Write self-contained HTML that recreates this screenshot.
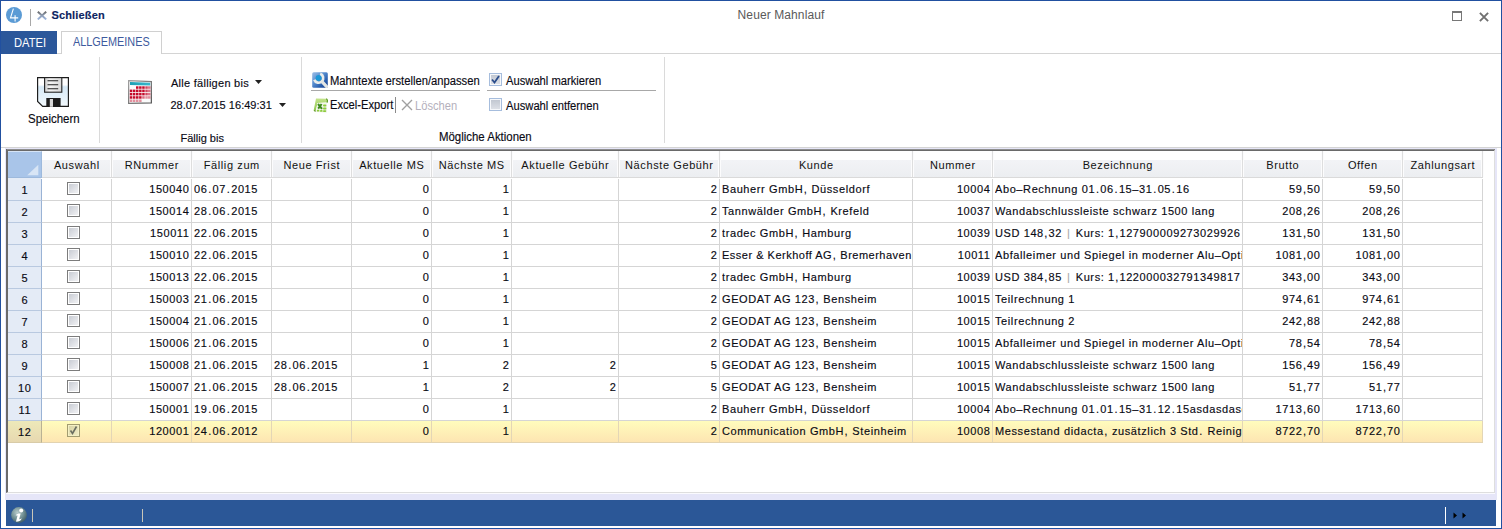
<!DOCTYPE html>
<html><head><meta charset="utf-8">
<style>
*{margin:0;padding:0;box-sizing:border-box}
html,body{width:1502px;height:529px;overflow:hidden;background:#fff;font-family:"Liberation Sans",sans-serif;color:#0a0a14;-webkit-text-stroke-width:.15px}
.a{position:absolute}
#win{position:absolute;left:0;top:0;width:1502px;height:529px;border:1px solid #2150a0;background:#fff}
.t{position:absolute;white-space:pre;line-height:1}
.sg{font-size:12px;transform-origin:0 0;transform:scaleX(0.917)}
/* grid */
.hc{-webkit-text-stroke-width:0;position:absolute;top:152px;height:25px;line-height:26px;text-align:center;font-size:11px;letter-spacing:.6px;text-indent:.6px;color:#111;white-space:nowrap;overflow:hidden}
.hs{position:absolute;top:151px;width:1px;height:26px;background:#dedede;box-shadow:-1px 0 0 #fcfcfd,1px 0 0 #fcfcfd}
.row{position:absolute;left:42px;width:1441px;height:22px;border-bottom:1px solid #d5d5d5}
.row.sel{background:linear-gradient(#fffcbc,#fde5b2);border-bottom-color:#e2d3b1}
.rh{position:absolute;left:8px;width:34px;height:22px;line-height:23px;background:#e4ebf6;border-right:1px solid #9ab3d5;border-bottom:1px solid #b9c9e0;text-align:center;font-size:11px;letter-spacing:.6px;text-indent:.6px}
.rh.selh{background:linear-gradient(#ede9b9,#e7d8b0);border-bottom-color:#d8cba8;border-right-color:#b9b294}
.c{position:absolute;height:22px;line-height:22px;font-size:11px;letter-spacing:.6px;white-space:nowrap;overflow:hidden}
.c.r{text-align:right}
.c{word-spacing:0}
.pd{padding:0 .75px}.pc{padding:0 .5px}.ph{padding:0 1.6px}
.c i{font-style:normal;color:#aaa;padding:0 1.5px}
.vs{position:absolute;width:1px;height:21px;background:#d5d5d5}
.vs.vsel{background:#e3d6b6}
.cb{position:absolute;width:13px;height:13px;border:1px solid #7c7c7c;box-shadow:inset 0 0 0 1px #fff;background:linear-gradient(135deg,#c4c8d0,#f6f6f8)}
.cb.chk{border-color:#a29c70;box-shadow:inset 0 0 0 1px #f4f0c4;background:linear-gradient(135deg,#d6d2a4,#f2eec6)}
.cb svg{position:absolute;left:-1px;top:-1px}
</style></head><body>
<div id="win">
</div>
<!-- title bar -->
<svg class="a" style="left:6px;top:7px" width="16" height="16" viewBox="0 0 16 16"><circle cx="8" cy="8" r="8" fill="#5b9bd5"/><path d="M7.4 1.6 L4.5 10.9 L12.2 10.9 M9.1 8.2 L9.1 14.4" stroke="#fff" stroke-width="1.1" fill="none"/></svg>
<div class="a" style="left:30px;top:9px;width:1px;height:17px;background:#a8a8a8"></div>
<svg class="a" style="left:37px;top:11px" width="10" height="9" viewBox="0 0 10 9"><defs><linearGradient id="xg2" x1="0" y1="0" x2="0" y2="1"><stop offset="0" stop-color="#6b6b6b"/><stop offset="0.45" stop-color="#8c9ab0"/><stop offset="1" stop-color="#9cb6e0"/></linearGradient></defs><path d="M0.8 0.8 L9.2 8.4 M9.2 0.8 L0.8 8.4" stroke="url(#xg2)" stroke-width="2" fill="none"/></svg>
<div class="t" style="left:51.5px;top:10px;font-size:11px;font-weight:bold;color:#0c2461;letter-spacing:0.15px">Schließen</div>
<div class="t" style="left:737.6px;top:8.5px;font-size:12px;color:#5a5a5a;letter-spacing:.1px;-webkit-text-stroke-width:0">Neuer Mahnlauf</div>
<div class="a" style="left:1452px;top:11px;width:10px;height:10px;border:1px solid #777;border-top-width:2px"></div>
<svg class="a" style="left:1479px;top:12px" width="10" height="10" viewBox="0 0 10 10"><path d="M0.9 0.9 L9.1 9.1 M9.1 0.9 L0.9 9.1" stroke="#707070" stroke-width="1.9" fill="none"/></svg>
<!-- tabs -->
<div class="a" style="left:1px;top:53px;width:1500px;height:1px;background:#d4d4d4"></div>
<div class="a" style="left:1px;top:31px;width:56px;height:23px;background:#2b579a"></div>
<div class="t" style="left:14px;top:37px;font-size:12px;color:#fff;transform-origin:0 0;transform:scaleX(.93);-webkit-text-stroke-width:0">DATEI</div>
<div class="a" style="left:61px;top:31px;width:101px;height:23px;border:1px solid #d0d0d0;border-bottom:none;background:#fff"></div>
<div class="t" style="left:73px;top:36.2px;font-size:12px;color:#3d5a9e;transform-origin:0 0;transform:scaleX(.905);-webkit-text-stroke-width:0">ALLGEMEINES</div>
<!-- ribbon -->
<div class="a" style="left:99px;top:57px;width:1px;height:86px;background:#dadada"></div>
<div class="a" style="left:301px;top:57px;width:1px;height:86px;background:#dadada"></div>
<div class="a" style="left:664px;top:57px;width:1px;height:86px;background:#dadada"></div>
<!-- floppy -->
<svg class="a" style="left:37px;top:77px" width="32" height="31" viewBox="0 0 32 31">
<defs><linearGradient id="fg" x1="0" y1="0" x2="0" y2="1"><stop offset="0" stop-color="#fff"/><stop offset="0.25" stop-color="#fff"/><stop offset="0.32" stop-color="#d6e9f6"/><stop offset="1" stop-color="#f2f8fc"/></linearGradient>
<linearGradient id="lg" x1="0" y1="0" x2="1" y2="0"><stop offset="0" stop-color="#c8c8c8"/><stop offset="0.3" stop-color="#f4f4f4"/><stop offset="1" stop-color="#d8d8d8"/></linearGradient></defs>
<path d="M0.6 0.6 H31.4 V29.4 H5.7 L0.6 24.5 Z" fill="url(#fg)" stroke="#1a1a1a" stroke-width="1.15"/>
<rect x="7.6" y="0.6" width="17.2" height="14.6" fill="url(#lg)" stroke="#222" stroke-width="1.1"/>
<path d="M10.5 3.8 H21.2 M10.5 7.8 H21.2 M10.5 11.8 H21.2" stroke="#222" stroke-width="1.1"/>
<rect x="9.3" y="21" width="14.3" height="8.8" fill="#1c1c1c"/>
<rect x="12.8" y="22" width="3.2" height="7.8" fill="#d8d8d8"/>
</svg>
<div class="t sg" style="left:28px;top:112.5px;transform:scaleX(.955)">Speichern</div>
<!-- calendar -->
<svg class="a" style="left:128px;top:80px" width="24" height="24" viewBox="0 0 24 24">
<defs><linearGradient id="cg" x1="0" y1="0" x2="1" y2="1"><stop offset="0" stop-color="#a0a0a0"/><stop offset="1" stop-color="#5a5a5a"/></linearGradient>
<linearGradient id="tg" x1="0" y1="0" x2="1" y2="0"><stop offset="0" stop-color="#1c9fb4"/><stop offset="1" stop-color="#38b8cc"/></linearGradient></defs>
<path d="M0.6 0.6 L23.4 1.6 L23.4 22.8 L0.6 23.4 Z" fill="#fbfbfb" stroke="url(#cg)" stroke-width="1.3"/>
<path d="M2 2 L22.2 2.8 L22.2 5.4 L2 5 Z" fill="url(#tg)"/>
<g fill="#c40a2a"><rect x="8.0" y="6.3" width="2.5" height="2.5" opacity="1.0"/><rect x="11.1" y="6.3" width="2.5" height="2.5" opacity="1.0"/><rect x="14.2" y="6.3" width="2.5" height="2.5" opacity="1.0"/><rect x="17.3" y="6.3" width="2.5" height="2.5" opacity="0.75"/><rect x="20.0" y="6.3" width="2.5" height="2.5" opacity="0.55"/><rect x="1.8" y="9.6" width="2.5" height="2.5" opacity="1.0"/><rect x="4.9" y="9.6" width="2.5" height="2.5" opacity="1.0"/><rect x="8.0" y="9.6" width="2.5" height="2.5" opacity="1.0"/><rect x="11.1" y="9.6" width="2.5" height="2.5" opacity="1.0"/><rect x="14.2" y="9.6" width="2.5" height="2.5" opacity="1.0"/><rect x="17.3" y="9.6" width="2.5" height="2.5" opacity="0.75"/><rect x="20.0" y="9.6" width="2.5" height="2.5" opacity="0.55"/><rect x="1.8" y="12.9" width="2.5" height="2.5" opacity="1.0"/><rect x="4.9" y="12.9" width="2.5" height="2.5" opacity="1.0"/><rect x="8.0" y="12.9" width="2.5" height="2.5" opacity="1.0"/><rect x="11.1" y="12.9" width="2.5" height="2.5" opacity="1.0"/><rect x="14.2" y="12.9" width="2.5" height="2.5" opacity="1.0"/><rect x="17.3" y="12.9" width="2.5" height="2.5" opacity="0.75"/><rect x="20.0" y="12.9" width="2.5" height="2.5" opacity="0.55"/><rect x="1.8" y="16.2" width="2.5" height="2.5" opacity="1.0"/><rect x="4.9" y="16.2" width="2.5" height="2.5" opacity="1.0"/><rect x="8.0" y="16.2" width="2.5" height="2.5" opacity="1.0"/><rect x="11.1" y="16.2" width="2.5" height="2.5" opacity="1.0"/><rect x="14.2" y="16.2" width="2.5" height="2.5" opacity="0.6"/><rect x="17.3" y="16.2" width="2.5" height="2.5" opacity="0.45"/><rect x="20.0" y="16.2" width="2.5" height="2.5" opacity="0.45"/><rect x="1.8" y="19.5" width="2.5" height="2.5" opacity="0.45"/><rect x="4.9" y="19.5" width="2.5" height="2.5" opacity="0.45"/><rect x="8.0" y="19.5" width="2.5" height="2.5" opacity="0.45"/><rect x="11.1" y="19.5" width="2.5" height="2.5" opacity="0.45"/></g>
</svg>
<div class="t" style="left:171px;top:78px;font-size:11px;letter-spacing:0.27px">Alle fälligen bis</div>
<svg class="a" style="left:255px;top:80px" width="7" height="4"><path d="M0 0 H7 L3.5 4 Z" fill="#222"/></svg>
<div class="t" style="left:170.4px;top:100.3px;font-size:11px;letter-spacing:0.03px">28.07.2015 16:49:31</div>
<svg class="a" style="left:279px;top:103px" width="7" height="4"><path d="M0 0 H7 L3.5 4 Z" fill="#222"/></svg>
<div class="t" style="left:180.5px;top:132.5px;font-size:11px">Fällig bis</div>
<!-- actions -->
<svg class="a" style="left:312px;top:72px" width="16" height="16" viewBox="0 0 16 16">
<defs><linearGradient id="mg" x1="0" y1="0" x2="1" y2="1"><stop offset="0" stop-color="#9bbde6"/><stop offset="0.4" stop-color="#5a8fd0"/><stop offset="0.7" stop-color="#2a5fae"/><stop offset="1" stop-color="#173f8e"/></linearGradient></defs>
<rect x="0.2" y="0.2" width="15.6" height="15.6" rx="1.5" fill="url(#mg)"/>
<circle cx="6.6" cy="6.1" r="3" fill="#1c98d6"/>
<path d="M2.3 7.7 A4.6 4.6 0 1 0 8.2 1.8" stroke="#e9ecea" stroke-width="2.6" fill="none"/>
<path d="M10.2 9.8 L14.4 14.4" stroke="#e3e6e5" stroke-width="3.2" stroke-linecap="round"/>
</svg>
<div class="t sg" style="left:330.2px;top:74.8px;transform:scaleX(.935)">Mahntexte erstellen/anpassen</div>
<div class="a" style="left:311px;top:90px;width:169px;height:1px;background:#a8a8a8"></div>
<svg class="a" style="left:312px;top:97px" width="16" height="16" viewBox="0 0 16 16">
<defs><linearGradient id="xg" x1="0" y1="0" x2="0" y2="1"><stop offset="0" stop-color="#c4e48c"/><stop offset="1" stop-color="#8cc44a"/></linearGradient>
<linearGradient id="xs" x1="0" y1="0" x2="1" y2="1"><stop offset="0" stop-color="#ffffff"/><stop offset="1" stop-color="#e4ead8"/></linearGradient></defs>
<path d="M4 1.5 L15 1.8 L15 5.5 L5.6 6 L3.6 14.5 L1.6 13.8 Z" fill="url(#xg)"/>
<path d="M14.2 1.8 C15.8 2.4 15.8 5 14.6 5.6" stroke="#5c9a26" stroke-width="1.2" fill="none"/>
<path d="M2 13.6 L3.8 14.4" stroke="#5c8a2a" stroke-width="1"/>
<path d="M5.6 6 L15 5.6 L14.6 15.6 L3.6 15 Z" fill="url(#xs)"/>
<g fill="#8ccc3a"><rect x="11" y="7.5" width="3.4" height="2" rx="1"/><rect x="11" y="10.5" width="3.4" height="2" rx="1"/><rect x="4.8" y="12.8" width="2.6" height="1.8" rx=".9"/><rect x="8" y="13" width="2.6" height="1.8" rx=".9"/><rect x="11" y="13.2" width="3.2" height="1.8" rx=".9"/></g>
<path d="M6 7 L10 11.8 M9.6 7 L6.2 11.6" stroke="#3f8a1c" stroke-width="2"/>
</svg>
<div class="t sg" style="left:330.2px;top:99.3px;transform:scaleX(.93)">Excel-Export</div>
<div class="a" style="left:395px;top:97px;width:1px;height:16px;background:#8a8a8a"></div>
<svg class="a" style="left:401px;top:99px" width="12" height="12" viewBox="0 0 12 12"><path d="M1 1 L11 11 M11 1 L1 11" stroke="#a0a0a0" stroke-width="1.4" fill="none"/></svg>
<div class="t sg" style="left:415.2px;top:99.8px;color:#b4b0bc;transform:scaleX(.93);-webkit-text-stroke-width:0">Löschen</div>
<div class="a" style="left:489px;top:73px;width:13px;height:13px;border:1px solid #a6bddd;box-shadow:inset 0 0 0 1px #f6f8fb;background:linear-gradient(#bfc5cf,#dfe2e8)"></div>
<svg class="a" style="left:489px;top:73px" width="13" height="13"><path d="M3 6.5 L5.5 9.5 L10 3" stroke="#2b4d8c" stroke-width="1.8" fill="none"/></svg>
<div class="t sg" style="left:505.8px;top:74.8px;transform:scaleX(.933)">Auswahl markieren</div>
<div class="a" style="left:487px;top:90px;width:169px;height:1px;background:#a8a8a8"></div>
<div class="a" style="left:489px;top:98px;width:13px;height:13px;border:1px solid #a6bddd;box-shadow:inset 0 0 0 1px #f6f8fb;background:linear-gradient(#bfc5cf,#dfe2e8)"></div>
<div class="t sg" style="left:505.8px;top:100.4px;transform:scaleX(.933)">Auswahl entfernen</div>
<div class="t sg" style="left:438.8px;top:130.5px;transform:scaleX(.952)">Mögliche Aktionen</div>
<!-- ribbon bottom -->
<div class="a" style="left:1px;top:147px;width:1500px;height:1px;background:#d4d4d4"></div>
<!-- grid frame -->
<div class="a" style="left:5px;top:148px;width:1492px;height:352px;background:#e6e6f8"></div>
<div class="a" style="left:6px;top:149px;width:1489px;height:344px;background:#fff;border-top:2px solid #6a6a6a;border-left:2px solid #6a6a6a;border-right:1px solid #dedede;border-bottom:1px solid #dedede"></div>
<div class="a" style="left:7px;top:149px;width:1487px;height:1px;background:#8e8e8e"></div>
<div class="a" style="left:8px;top:151px;width:34px;height:27px;background:#a9c5e9;border-top:1px solid #d6e4f6;border-right:1px solid #9db9dc;border-bottom:1px solid #9db9dc"></div>
<svg class="a" style="left:26px;top:164px" width="13" height="12"><path d="M12.3 0.8 L12.3 11.3 L1.2 11.3 Z" fill="#dde8f6" opacity=".9"/></svg>
<div class="a" style="left:42px;top:151px;width:1441px;height:27px;background:linear-gradient(#fff 0,#fff 9px,#f2f3f6 9px,#eceef1 26px);border-bottom:1px solid #dadada"></div>
<div class="a" style="left:8px;top:178px;width:33px;height:1px;background:#e4ebf6"></div>
<div class="hc" style="left:42px;width:69px">Auswahl</div>
<div class="hs" style="left:111px"></div>
<div class="hc" style="left:112px;width:79px">RNummer</div>
<div class="hs" style="left:191px"></div>
<div class="hc" style="left:192px;width:79px">Fällig zum</div>
<div class="hs" style="left:271px"></div>
<div class="hc" style="left:272px;width:79px">Neue Frist</div>
<div class="hs" style="left:351px"></div>
<div class="hc" style="left:352px;width:79px">Aktuelle MS</div>
<div class="hs" style="left:431px"></div>
<div class="hc" style="left:432px;width:79px">Nächste MS</div>
<div class="hs" style="left:511px"></div>
<div class="hc" style="left:512px;width:106px">Aktuelle Gebühr</div>
<div class="hs" style="left:618px"></div>
<div class="hc" style="left:619px;width:100px">Nächste Gebühr</div>
<div class="hs" style="left:719px"></div>
<div class="hc" style="left:720px;width:192px">Kunde</div>
<div class="hs" style="left:912px"></div>
<div class="hc" style="left:913px;width:79px">Nummer</div>
<div class="hs" style="left:992px"></div>
<div class="hc" style="left:993px;width:249px">Bezeichnung</div>
<div class="hs" style="left:1242px"></div>
<div class="hc" style="left:1243px;width:79px">Brutto</div>
<div class="hs" style="left:1322px"></div>
<div class="hc" style="left:1323px;width:79px">Offen</div>
<div class="hs" style="left:1402px"></div>
<div class="hc" style="left:1403px;width:79px">Zahlungsart</div>
<div class="hs" style="left:1482px"></div>
<div class="row" style="top:179px"></div>
<div class="rh" style="top:179px">1</div>
<div class="cb" style="left:67px;top:182px"></div>
<div class="c r" style="left:112px;width:77.5px;top:178px">150040</div>
<div class="c l" style="left:194px;width:77px;top:178px">06<span class="pd">.</span>07<span class="pd">.</span>2015</div>
<div class="c r" style="left:352px;width:77.5px;top:178px">0</div>
<div class="c r" style="left:432px;width:77.5px;top:178px">1</div>
<div class="c r" style="left:619px;width:98.5px;top:178px">2</div>
<div class="c l" style="left:722px;width:190px;top:178px">Bauherr GmbH<span class="pc">,</span> Düsseldorf</div>
<div class="c r" style="left:913px;width:77.5px;top:178px">10004</div>
<div class="c l" style="left:995px;width:247px;top:178px">Abo–Rechnung 01<span class="pd">.</span>06<span class="pd">.</span>15–31<span class="pd">.</span>05<span class="pd">.</span>16</div>
<div class="c r" style="left:1243px;width:77.5px;top:178px">59<span class="pc">,</span>50</div>
<div class="c r" style="left:1323px;width:77.5px;top:178px">59<span class="pc">,</span>50</div>
<div class="vs" style="left:111px;top:179px"></div>
<div class="vs" style="left:191px;top:179px"></div>
<div class="vs" style="left:271px;top:179px"></div>
<div class="vs" style="left:351px;top:179px"></div>
<div class="vs" style="left:431px;top:179px"></div>
<div class="vs" style="left:511px;top:179px"></div>
<div class="vs" style="left:618px;top:179px"></div>
<div class="vs" style="left:719px;top:179px"></div>
<div class="vs" style="left:912px;top:179px"></div>
<div class="vs" style="left:992px;top:179px"></div>
<div class="vs" style="left:1242px;top:179px"></div>
<div class="vs" style="left:1322px;top:179px"></div>
<div class="vs" style="left:1402px;top:179px"></div>
<div class="vs" style="left:1482px;top:179px"></div>
<div class="row" style="top:201px"></div>
<div class="rh" style="top:201px">2</div>
<div class="cb" style="left:67px;top:204px"></div>
<div class="c r" style="left:112px;width:77.5px;top:200px">150014</div>
<div class="c l" style="left:194px;width:77px;top:200px">28<span class="pd">.</span>06<span class="pd">.</span>2015</div>
<div class="c r" style="left:352px;width:77.5px;top:200px">0</div>
<div class="c r" style="left:432px;width:77.5px;top:200px">1</div>
<div class="c r" style="left:619px;width:98.5px;top:200px">2</div>
<div class="c l" style="left:722px;width:190px;top:200px">Tannwälder GmbH<span class="pc">,</span> Krefeld</div>
<div class="c r" style="left:913px;width:77.5px;top:200px">10037</div>
<div class="c l" style="left:995px;width:247px;top:200px">Wandabschlussleiste schwarz 1500 lang</div>
<div class="c r" style="left:1243px;width:77.5px;top:200px">208<span class="pc">,</span>26</div>
<div class="c r" style="left:1323px;width:77.5px;top:200px">208<span class="pc">,</span>26</div>
<div class="vs" style="left:111px;top:201px"></div>
<div class="vs" style="left:191px;top:201px"></div>
<div class="vs" style="left:271px;top:201px"></div>
<div class="vs" style="left:351px;top:201px"></div>
<div class="vs" style="left:431px;top:201px"></div>
<div class="vs" style="left:511px;top:201px"></div>
<div class="vs" style="left:618px;top:201px"></div>
<div class="vs" style="left:719px;top:201px"></div>
<div class="vs" style="left:912px;top:201px"></div>
<div class="vs" style="left:992px;top:201px"></div>
<div class="vs" style="left:1242px;top:201px"></div>
<div class="vs" style="left:1322px;top:201px"></div>
<div class="vs" style="left:1402px;top:201px"></div>
<div class="vs" style="left:1482px;top:201px"></div>
<div class="row" style="top:223px"></div>
<div class="rh" style="top:223px">3</div>
<div class="cb" style="left:67px;top:226px"></div>
<div class="c r" style="left:112px;width:77.5px;top:222px">150011</div>
<div class="c l" style="left:194px;width:77px;top:222px">22<span class="pd">.</span>06<span class="pd">.</span>2015</div>
<div class="c r" style="left:352px;width:77.5px;top:222px">0</div>
<div class="c r" style="left:432px;width:77.5px;top:222px">1</div>
<div class="c r" style="left:619px;width:98.5px;top:222px">2</div>
<div class="c l" style="left:722px;width:190px;top:222px">tradec GmbH<span class="pc">,</span> Hamburg</div>
<div class="c r" style="left:913px;width:77.5px;top:222px">10039</div>
<div class="c l" style="left:995px;width:247px;top:222px">USD 148<span class="pc">,</span>32 <i>|</i> Kurs: 1<span class="pc">,</span>127900009273029926</div>
<div class="c r" style="left:1243px;width:77.5px;top:222px">131<span class="pc">,</span>50</div>
<div class="c r" style="left:1323px;width:77.5px;top:222px">131<span class="pc">,</span>50</div>
<div class="vs" style="left:111px;top:223px"></div>
<div class="vs" style="left:191px;top:223px"></div>
<div class="vs" style="left:271px;top:223px"></div>
<div class="vs" style="left:351px;top:223px"></div>
<div class="vs" style="left:431px;top:223px"></div>
<div class="vs" style="left:511px;top:223px"></div>
<div class="vs" style="left:618px;top:223px"></div>
<div class="vs" style="left:719px;top:223px"></div>
<div class="vs" style="left:912px;top:223px"></div>
<div class="vs" style="left:992px;top:223px"></div>
<div class="vs" style="left:1242px;top:223px"></div>
<div class="vs" style="left:1322px;top:223px"></div>
<div class="vs" style="left:1402px;top:223px"></div>
<div class="vs" style="left:1482px;top:223px"></div>
<div class="row" style="top:245px"></div>
<div class="rh" style="top:245px">4</div>
<div class="cb" style="left:67px;top:248px"></div>
<div class="c r" style="left:112px;width:77.5px;top:244px">150010</div>
<div class="c l" style="left:194px;width:77px;top:244px">22<span class="pd">.</span>06<span class="pd">.</span>2015</div>
<div class="c r" style="left:352px;width:77.5px;top:244px">0</div>
<div class="c r" style="left:432px;width:77.5px;top:244px">1</div>
<div class="c r" style="left:619px;width:98.5px;top:244px">2</div>
<div class="c l" style="left:722px;width:190px;top:244px"><span style="letter-spacing:.5px">Esser &amp; Kerkhoff AG<span class="pc">,</span> Bremerhaven</span></div>
<div class="c r" style="left:913px;width:77.5px;top:244px">10011</div>
<div class="c l" style="left:995px;width:247px;top:244px">Abfalleimer und Spiegel in moderner Alu–Optik</div>
<div class="c r" style="left:1243px;width:77.5px;top:244px">1081<span class="pc">,</span>00</div>
<div class="c r" style="left:1323px;width:77.5px;top:244px">1081<span class="pc">,</span>00</div>
<div class="vs" style="left:111px;top:245px"></div>
<div class="vs" style="left:191px;top:245px"></div>
<div class="vs" style="left:271px;top:245px"></div>
<div class="vs" style="left:351px;top:245px"></div>
<div class="vs" style="left:431px;top:245px"></div>
<div class="vs" style="left:511px;top:245px"></div>
<div class="vs" style="left:618px;top:245px"></div>
<div class="vs" style="left:719px;top:245px"></div>
<div class="vs" style="left:912px;top:245px"></div>
<div class="vs" style="left:992px;top:245px"></div>
<div class="vs" style="left:1242px;top:245px"></div>
<div class="vs" style="left:1322px;top:245px"></div>
<div class="vs" style="left:1402px;top:245px"></div>
<div class="vs" style="left:1482px;top:245px"></div>
<div class="row" style="top:267px"></div>
<div class="rh" style="top:267px">5</div>
<div class="cb" style="left:67px;top:270px"></div>
<div class="c r" style="left:112px;width:77.5px;top:266px">150013</div>
<div class="c l" style="left:194px;width:77px;top:266px">22<span class="pd">.</span>06<span class="pd">.</span>2015</div>
<div class="c r" style="left:352px;width:77.5px;top:266px">0</div>
<div class="c r" style="left:432px;width:77.5px;top:266px">1</div>
<div class="c r" style="left:619px;width:98.5px;top:266px">2</div>
<div class="c l" style="left:722px;width:190px;top:266px">tradec GmbH<span class="pc">,</span> Hamburg</div>
<div class="c r" style="left:913px;width:77.5px;top:266px">10039</div>
<div class="c l" style="left:995px;width:247px;top:266px">USD 384<span class="pc">,</span>85 <i>|</i> Kurs: 1<span class="pc">,</span>122000032791349817</div>
<div class="c r" style="left:1243px;width:77.5px;top:266px">343<span class="pc">,</span>00</div>
<div class="c r" style="left:1323px;width:77.5px;top:266px">343<span class="pc">,</span>00</div>
<div class="vs" style="left:111px;top:267px"></div>
<div class="vs" style="left:191px;top:267px"></div>
<div class="vs" style="left:271px;top:267px"></div>
<div class="vs" style="left:351px;top:267px"></div>
<div class="vs" style="left:431px;top:267px"></div>
<div class="vs" style="left:511px;top:267px"></div>
<div class="vs" style="left:618px;top:267px"></div>
<div class="vs" style="left:719px;top:267px"></div>
<div class="vs" style="left:912px;top:267px"></div>
<div class="vs" style="left:992px;top:267px"></div>
<div class="vs" style="left:1242px;top:267px"></div>
<div class="vs" style="left:1322px;top:267px"></div>
<div class="vs" style="left:1402px;top:267px"></div>
<div class="vs" style="left:1482px;top:267px"></div>
<div class="row" style="top:289px"></div>
<div class="rh" style="top:289px">6</div>
<div class="cb" style="left:67px;top:292px"></div>
<div class="c r" style="left:112px;width:77.5px;top:288px">150003</div>
<div class="c l" style="left:194px;width:77px;top:288px">21<span class="pd">.</span>06<span class="pd">.</span>2015</div>
<div class="c r" style="left:352px;width:77.5px;top:288px">0</div>
<div class="c r" style="left:432px;width:77.5px;top:288px">1</div>
<div class="c r" style="left:619px;width:98.5px;top:288px">2</div>
<div class="c l" style="left:722px;width:190px;top:288px">GEODAT AG 123<span class="pc">,</span> Bensheim</div>
<div class="c r" style="left:913px;width:77.5px;top:288px">10015</div>
<div class="c l" style="left:995px;width:247px;top:288px">Teilrechnung 1</div>
<div class="c r" style="left:1243px;width:77.5px;top:288px">974<span class="pc">,</span>61</div>
<div class="c r" style="left:1323px;width:77.5px;top:288px">974<span class="pc">,</span>61</div>
<div class="vs" style="left:111px;top:289px"></div>
<div class="vs" style="left:191px;top:289px"></div>
<div class="vs" style="left:271px;top:289px"></div>
<div class="vs" style="left:351px;top:289px"></div>
<div class="vs" style="left:431px;top:289px"></div>
<div class="vs" style="left:511px;top:289px"></div>
<div class="vs" style="left:618px;top:289px"></div>
<div class="vs" style="left:719px;top:289px"></div>
<div class="vs" style="left:912px;top:289px"></div>
<div class="vs" style="left:992px;top:289px"></div>
<div class="vs" style="left:1242px;top:289px"></div>
<div class="vs" style="left:1322px;top:289px"></div>
<div class="vs" style="left:1402px;top:289px"></div>
<div class="vs" style="left:1482px;top:289px"></div>
<div class="row" style="top:311px"></div>
<div class="rh" style="top:311px">7</div>
<div class="cb" style="left:67px;top:314px"></div>
<div class="c r" style="left:112px;width:77.5px;top:310px">150004</div>
<div class="c l" style="left:194px;width:77px;top:310px">21<span class="pd">.</span>06<span class="pd">.</span>2015</div>
<div class="c r" style="left:352px;width:77.5px;top:310px">0</div>
<div class="c r" style="left:432px;width:77.5px;top:310px">1</div>
<div class="c r" style="left:619px;width:98.5px;top:310px">2</div>
<div class="c l" style="left:722px;width:190px;top:310px">GEODAT AG 123<span class="pc">,</span> Bensheim</div>
<div class="c r" style="left:913px;width:77.5px;top:310px">10015</div>
<div class="c l" style="left:995px;width:247px;top:310px">Teilrechnung 2</div>
<div class="c r" style="left:1243px;width:77.5px;top:310px">242<span class="pc">,</span>88</div>
<div class="c r" style="left:1323px;width:77.5px;top:310px">242<span class="pc">,</span>88</div>
<div class="vs" style="left:111px;top:311px"></div>
<div class="vs" style="left:191px;top:311px"></div>
<div class="vs" style="left:271px;top:311px"></div>
<div class="vs" style="left:351px;top:311px"></div>
<div class="vs" style="left:431px;top:311px"></div>
<div class="vs" style="left:511px;top:311px"></div>
<div class="vs" style="left:618px;top:311px"></div>
<div class="vs" style="left:719px;top:311px"></div>
<div class="vs" style="left:912px;top:311px"></div>
<div class="vs" style="left:992px;top:311px"></div>
<div class="vs" style="left:1242px;top:311px"></div>
<div class="vs" style="left:1322px;top:311px"></div>
<div class="vs" style="left:1402px;top:311px"></div>
<div class="vs" style="left:1482px;top:311px"></div>
<div class="row" style="top:333px"></div>
<div class="rh" style="top:333px">8</div>
<div class="cb" style="left:67px;top:336px"></div>
<div class="c r" style="left:112px;width:77.5px;top:332px">150006</div>
<div class="c l" style="left:194px;width:77px;top:332px">21<span class="pd">.</span>06<span class="pd">.</span>2015</div>
<div class="c r" style="left:352px;width:77.5px;top:332px">0</div>
<div class="c r" style="left:432px;width:77.5px;top:332px">1</div>
<div class="c r" style="left:619px;width:98.5px;top:332px">2</div>
<div class="c l" style="left:722px;width:190px;top:332px">GEODAT AG 123<span class="pc">,</span> Bensheim</div>
<div class="c r" style="left:913px;width:77.5px;top:332px">10015</div>
<div class="c l" style="left:995px;width:247px;top:332px">Abfalleimer und Spiegel in moderner Alu–Optik</div>
<div class="c r" style="left:1243px;width:77.5px;top:332px">78<span class="pc">,</span>54</div>
<div class="c r" style="left:1323px;width:77.5px;top:332px">78<span class="pc">,</span>54</div>
<div class="vs" style="left:111px;top:333px"></div>
<div class="vs" style="left:191px;top:333px"></div>
<div class="vs" style="left:271px;top:333px"></div>
<div class="vs" style="left:351px;top:333px"></div>
<div class="vs" style="left:431px;top:333px"></div>
<div class="vs" style="left:511px;top:333px"></div>
<div class="vs" style="left:618px;top:333px"></div>
<div class="vs" style="left:719px;top:333px"></div>
<div class="vs" style="left:912px;top:333px"></div>
<div class="vs" style="left:992px;top:333px"></div>
<div class="vs" style="left:1242px;top:333px"></div>
<div class="vs" style="left:1322px;top:333px"></div>
<div class="vs" style="left:1402px;top:333px"></div>
<div class="vs" style="left:1482px;top:333px"></div>
<div class="row" style="top:355px"></div>
<div class="rh" style="top:355px">9</div>
<div class="cb" style="left:67px;top:358px"></div>
<div class="c r" style="left:112px;width:77.5px;top:354px">150008</div>
<div class="c l" style="left:194px;width:77px;top:354px">21<span class="pd">.</span>06<span class="pd">.</span>2015</div>
<div class="c l" style="left:274px;width:77px;top:354px">28<span class="pd">.</span>06<span class="pd">.</span>2015</div>
<div class="c r" style="left:352px;width:77.5px;top:354px">1</div>
<div class="c r" style="left:432px;width:77.5px;top:354px">2</div>
<div class="c r" style="left:512px;width:104.5px;top:354px">2</div>
<div class="c r" style="left:619px;width:98.5px;top:354px">5</div>
<div class="c l" style="left:722px;width:190px;top:354px">GEODAT AG 123<span class="pc">,</span> Bensheim</div>
<div class="c r" style="left:913px;width:77.5px;top:354px">10015</div>
<div class="c l" style="left:995px;width:247px;top:354px">Wandabschlussleiste schwarz 1500 lang</div>
<div class="c r" style="left:1243px;width:77.5px;top:354px">156<span class="pc">,</span>49</div>
<div class="c r" style="left:1323px;width:77.5px;top:354px">156<span class="pc">,</span>49</div>
<div class="vs" style="left:111px;top:355px"></div>
<div class="vs" style="left:191px;top:355px"></div>
<div class="vs" style="left:271px;top:355px"></div>
<div class="vs" style="left:351px;top:355px"></div>
<div class="vs" style="left:431px;top:355px"></div>
<div class="vs" style="left:511px;top:355px"></div>
<div class="vs" style="left:618px;top:355px"></div>
<div class="vs" style="left:719px;top:355px"></div>
<div class="vs" style="left:912px;top:355px"></div>
<div class="vs" style="left:992px;top:355px"></div>
<div class="vs" style="left:1242px;top:355px"></div>
<div class="vs" style="left:1322px;top:355px"></div>
<div class="vs" style="left:1402px;top:355px"></div>
<div class="vs" style="left:1482px;top:355px"></div>
<div class="row" style="top:377px"></div>
<div class="rh" style="top:377px">10</div>
<div class="cb" style="left:67px;top:380px"></div>
<div class="c r" style="left:112px;width:77.5px;top:376px">150007</div>
<div class="c l" style="left:194px;width:77px;top:376px">21<span class="pd">.</span>06<span class="pd">.</span>2015</div>
<div class="c l" style="left:274px;width:77px;top:376px">28<span class="pd">.</span>06<span class="pd">.</span>2015</div>
<div class="c r" style="left:352px;width:77.5px;top:376px">1</div>
<div class="c r" style="left:432px;width:77.5px;top:376px">2</div>
<div class="c r" style="left:512px;width:104.5px;top:376px">2</div>
<div class="c r" style="left:619px;width:98.5px;top:376px">5</div>
<div class="c l" style="left:722px;width:190px;top:376px">GEODAT AG 123<span class="pc">,</span> Bensheim</div>
<div class="c r" style="left:913px;width:77.5px;top:376px">10015</div>
<div class="c l" style="left:995px;width:247px;top:376px">Wandabschlussleiste schwarz 1500 lang</div>
<div class="c r" style="left:1243px;width:77.5px;top:376px">51<span class="pc">,</span>77</div>
<div class="c r" style="left:1323px;width:77.5px;top:376px">51<span class="pc">,</span>77</div>
<div class="vs" style="left:111px;top:377px"></div>
<div class="vs" style="left:191px;top:377px"></div>
<div class="vs" style="left:271px;top:377px"></div>
<div class="vs" style="left:351px;top:377px"></div>
<div class="vs" style="left:431px;top:377px"></div>
<div class="vs" style="left:511px;top:377px"></div>
<div class="vs" style="left:618px;top:377px"></div>
<div class="vs" style="left:719px;top:377px"></div>
<div class="vs" style="left:912px;top:377px"></div>
<div class="vs" style="left:992px;top:377px"></div>
<div class="vs" style="left:1242px;top:377px"></div>
<div class="vs" style="left:1322px;top:377px"></div>
<div class="vs" style="left:1402px;top:377px"></div>
<div class="vs" style="left:1482px;top:377px"></div>
<div class="row" style="top:399px"></div>
<div class="rh" style="top:399px">11</div>
<div class="cb" style="left:67px;top:402px"></div>
<div class="c r" style="left:112px;width:77.5px;top:398px">150001</div>
<div class="c l" style="left:194px;width:77px;top:398px">19<span class="pd">.</span>06<span class="pd">.</span>2015</div>
<div class="c r" style="left:352px;width:77.5px;top:398px">0</div>
<div class="c r" style="left:432px;width:77.5px;top:398px">1</div>
<div class="c r" style="left:619px;width:98.5px;top:398px">2</div>
<div class="c l" style="left:722px;width:190px;top:398px">Bauherr GmbH<span class="pc">,</span> Düsseldorf</div>
<div class="c r" style="left:913px;width:77.5px;top:398px">10004</div>
<div class="c l" style="left:995px;width:247px;top:398px">Abo–Rechnung 01<span class="pd">.</span>01<span class="pd">.</span>15–31<span class="pd">.</span>12<span class="pd">.</span>15asdasdasdasd</div>
<div class="c r" style="left:1243px;width:77.5px;top:398px">1713<span class="pc">,</span>60</div>
<div class="c r" style="left:1323px;width:77.5px;top:398px">1713<span class="pc">,</span>60</div>
<div class="vs" style="left:111px;top:399px"></div>
<div class="vs" style="left:191px;top:399px"></div>
<div class="vs" style="left:271px;top:399px"></div>
<div class="vs" style="left:351px;top:399px"></div>
<div class="vs" style="left:431px;top:399px"></div>
<div class="vs" style="left:511px;top:399px"></div>
<div class="vs" style="left:618px;top:399px"></div>
<div class="vs" style="left:719px;top:399px"></div>
<div class="vs" style="left:912px;top:399px"></div>
<div class="vs" style="left:992px;top:399px"></div>
<div class="vs" style="left:1242px;top:399px"></div>
<div class="vs" style="left:1322px;top:399px"></div>
<div class="vs" style="left:1402px;top:399px"></div>
<div class="vs" style="left:1482px;top:399px"></div>
<div class="row sel" style="top:421px"></div>
<div class="rh selh" style="top:421px">12</div>
<div class="cb chk" style="left:67px;top:424px"><svg width=13 height=13><path d="M3.5 6.5 L5.5 9.5 L9.5 2.5" stroke="#6a6e60" stroke-width="1.6" fill="none"/></svg></div>
<div class="c r" style="left:112px;width:77.5px;top:420px">120001</div>
<div class="c l" style="left:194px;width:77px;top:420px">24<span class="pd">.</span>06<span class="pd">.</span>2012</div>
<div class="c r" style="left:352px;width:77.5px;top:420px">0</div>
<div class="c r" style="left:432px;width:77.5px;top:420px">1</div>
<div class="c r" style="left:619px;width:98.5px;top:420px">2</div>
<div class="c l" style="left:722px;width:190px;top:420px">Communication GmbH<span class="pc">,</span> Steinheim</div>
<div class="c r" style="left:913px;width:77.5px;top:420px">10008</div>
<div class="c l" style="left:995px;width:247px;top:420px">Messestand didacta<span class="pc">,</span> zusätzlich 3 Std<span class="pd">.</span> Reinigung</div>
<div class="c r" style="left:1243px;width:77.5px;top:420px">8722<span class="pc">,</span>70</div>
<div class="c r" style="left:1323px;width:77.5px;top:420px">8722<span class="pc">,</span>70</div>
<div class="vs vsel" style="left:111px;top:421px"></div>
<div class="vs vsel" style="left:191px;top:421px"></div>
<div class="vs vsel" style="left:271px;top:421px"></div>
<div class="vs vsel" style="left:351px;top:421px"></div>
<div class="vs vsel" style="left:431px;top:421px"></div>
<div class="vs vsel" style="left:511px;top:421px"></div>
<div class="vs vsel" style="left:618px;top:421px"></div>
<div class="vs vsel" style="left:719px;top:421px"></div>
<div class="vs vsel" style="left:912px;top:421px"></div>
<div class="vs vsel" style="left:992px;top:421px"></div>
<div class="vs vsel" style="left:1242px;top:421px"></div>
<div class="vs vsel" style="left:1322px;top:421px"></div>
<div class="vs vsel" style="left:1402px;top:421px"></div>
<div class="vs vsel" style="left:1482px;top:421px"></div>
<div class="a" style="left:6px;top:493px;width:1489px;height:1px;background:#fafafe"></div>
<!-- status bar -->
<div class="a" style="left:6px;top:500px;width:1490px;height:26px;background:#2b5797"></div>
<svg class="a" style="left:11px;top:507px" width="16" height="16" viewBox="0 0 16 16">
<defs><radialGradient id="ig" cx="0.4" cy="0.35" r="0.75"><stop offset="0" stop-color="#b9cccc"/><stop offset="0.55" stop-color="#6e8d91"/><stop offset="1" stop-color="#34505a"/></radialGradient></defs>
<circle cx="8" cy="8" r="7.9" fill="url(#ig)"/>
<circle cx="10.2" cy="3.4" r="2" fill="#fff"/>
<path d="M4.6 8.2 C6 6.8 8 6.2 9.6 6.6 L8.2 12.2 C9 12.2 9.8 11.8 10.6 11.2 L10 13 C8.4 14.4 6.6 14.8 5 14.6 L6.6 8.6 C6 8.4 5.4 8.4 4.6 8.2 Z" fill="#fff"/>
</svg>
<div class="a" style="left:32px;top:509px;width:1px;height:13px;background:#c9c6b8"></div>
<div class="a" style="left:142px;top:509px;width:1px;height:13px;background:#c9c6b8"></div>
<div class="a" style="left:1445px;top:507px;width:1px;height:17px;background:#fff"></div>
<svg class="a" style="left:1453px;top:512px" width="14" height="8"><path d="M0.5 0.5 L4 3.5 L0.5 6.5 Z M9.5 0.5 L13 3.5 L9.5 6.5 Z" fill="#000"/></svg>
<!-- window border -->
<div class="a" style="left:0;top:0;width:1502px;height:529px;border:1px solid #2150a0;pointer-events:none"></div>
</body></html>
